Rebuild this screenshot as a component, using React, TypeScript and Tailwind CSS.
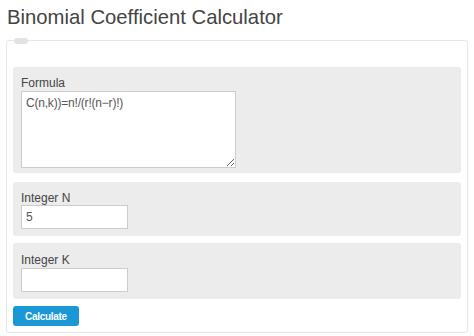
export default function App() {
  return (
    <div className="min-h-[336px] w-[474px] bg-white font-['Liberation_Sans',Arial,sans-serif] text-[#333]">
      <h1 className="pl-[7px] pt-[5px] text-[20.3px] leading-[24px] text-[#444]">Binomial Coefficient Calculator</h1>
      <div className="relative mx-[6px] mt-[11px] rounded-[3px] border border-[#e6e6e6] px-[6px] pb-[6px] pt-[26px]">
        <span className="absolute left-[7px] top-[-3px] h-[6px] w-[14px] rounded-full bg-[#e3e3e3]" />
        <div className="rounded-[3px] bg-[#ececec] px-[8px] pb-[5px] pt-[9px]">
          <div className="text-[12px] leading-[15px] text-[#444]">Formula</div>
          <textarea
            readOnly
            defaultValue="C(n,k))=n!/(r!(n−r)!)"
            className="block h-[77px] w-[215px] resize border border-[#cccccc] bg-white px-[4px] py-[4px] text-[12px] leading-[15px] tracking-[-0.2px] text-[#555] outline-none"
          />
        </div>
        <div className="mt-[9px] rounded-[3px] bg-[#ececec] px-[8px] pb-[7px] pt-[9px]">
          <div className="text-[12px] leading-[14px] text-[#444]">Integer N</div>
          <input
            readOnly
            defaultValue="5"
            className="block h-[24px] w-[107px] border border-[#cccccc] bg-white px-[4px] text-[12px] text-[#555] outline-none"
          />
        </div>
        <div className="mt-[7px] rounded-[3px] bg-[#ececec] px-[8px] pb-[7px] pt-[9px]">
          <div className="text-[12px] leading-[16px] text-[#444]">Integer K</div>
          <input
            readOnly
            className="block h-[24px] w-[107px] border border-[#cccccc] bg-white px-[4px] text-[12px] text-[#555] outline-none"
          />
        </div>
        <button className="mt-[7px] block h-[20px] w-[66px] rounded-[3px] bg-[#1a97d5] text-[10px] font-bold tracking-[-0.3px] text-white">
          Calculate
        </button>
      </div>
    </div>
  );
}
